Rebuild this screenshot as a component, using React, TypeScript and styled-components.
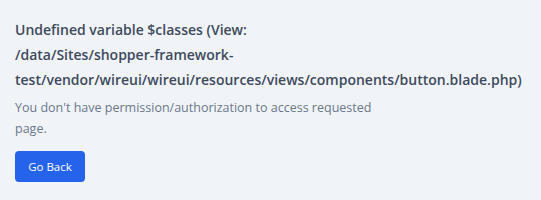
import React from "react";
import styled, { createGlobalStyle } from "styled-components";

const Global = createGlobalStyle`
  html, body { margin: 0; padding: 0; background: #f0f4f9; }
  body { font-family: "Open Sans", "Noto Sans", sans-serif; }
`;

const Page = styled.div`
  width: 541px;
  height: 200px;
  box-sizing: border-box;
  padding: 17px 15px;
  background: #f0f4f9;
`;

const Content = styled.div`
  max-width: 384px;
`;

const Title = styled.h1`
  margin: 0;
  max-width: 360px;
  font-size: 14px;
  line-height: 25px;
  font-weight: 600;
  color: #3e4a5c;
`;

const Message = styled.p`
  margin: 5px 0 0;
  font-size: 12.5px;
  line-height: 21px;
  color: #6b778a;
`;

const Button = styled.button`
  margin-top: 12px;
  width: 70px;
  height: 31px;
  border: none;
  border-radius: 4px;
  background: #2563eb;
  color: #ffffff;
  font-family: inherit;
  font-size: 11.5px;
  font-weight: 500;
  cursor: pointer;
`;

export default function App() {
  return (
    <Page>
      <Global />
      <Content>
        <Title>
          Undefined variable $classes (View: /data/Sites/shopper-framework-test/vendor/wireui/wireui/resources/views/components/button.blade.php)
        </Title>
        <Message>You don't have permission/authorization to access requested page.</Message>
        <Button>Go Back</Button>
      </Content>
    </Page>
  );
}
